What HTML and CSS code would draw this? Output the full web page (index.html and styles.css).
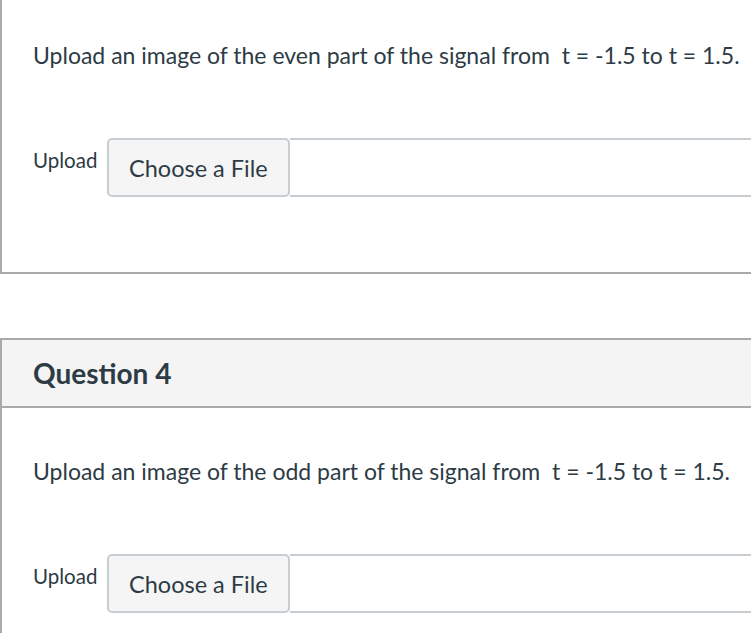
FILE: index.html
```html
<!DOCTYPE html>
<html>
<head>
<meta charset="utf-8">
<link rel="stylesheet" href="styles.css">
</head>
<body>
<div class="page">
  <section class="question first">
    <div class="q-body">
      <p class="q-text">Upload an image of the even part of the signal from &nbsp;t = -1.5 to t = 1.5.</p>
      <div class="upload-row">
        <span class="upload-label">Upload</span>
        <div class="file-field">
          <span class="file-btn">Choose a File</span>
          <span class="file-rest"></span>
        </div>
      </div>
    </div>
  </section>

  <section class="question second">
    <header class="q-header">Question 4</header>
    <div class="q-body">
      <p class="q-text">Upload an image of the odd part of the signal from &nbsp;t = -1.5 to t = 1.5.</p>
      <div class="upload-row">
        <span class="upload-label">Upload</span>
        <div class="file-field">
          <span class="file-btn">Choose a File</span>
          <span class="file-rest"></span>
        </div>
      </div>
    </div>
  </section>
</div>
</body>
</html>
```

FILE: styles.css
```css
html, body {
  margin: 0;
  padding: 0;
  background: #ffffff;
  overflow: hidden;
}
body {
  font-family: Lato, "Open Sans", "Liberation Sans", sans-serif;
  color: #2d3b45;
}
.page {
  width: 820px;
}
.question {
  border-left: 2px solid #aaaaaa;
  border-right: 2px solid #aaaaaa;
  border-bottom: 2px solid #aaaaaa;
}
.question.second {
  margin-top: 64px;
  border-top: 2px solid #aaaaaa;
}
.q-header {
  background: #f4f4f4;
  border-bottom: 2px solid #aaaaaa;
  height: 68px;
  box-sizing: border-box;
  padding-left: 31px;
  display: flex;
  align-items: center;
  font-size: 28px;
  font-weight: 700;
}
.q-body {
  padding: 0 0 75px 31px;
}
.first .q-body {
  padding-top: 41px;
}
.second .q-body {
  padding-top: 49px;
}
.q-text {
  margin: 0;
  font-size: 23px;
  line-height: 28px;
}
.upload-row {
  display: flex;
  align-items: flex-start;
  margin-top: 69px;
}
.upload-label {
  font-size: 20.5px;
  line-height: 24px;
  margin-top: 10px;
  width: 74px;
}
.file-field {
  display: flex;
  flex: 1;
  height: 59px;
}
.file-btn {
  display: flex;
  align-items: center;
  box-sizing: border-box;
  height: 59px;
  padding: 0 20px;
  background: #f5f5f5;
  border: 2px solid #c7cdd1;
  border-radius: 5px;
  font-size: 23.5px;
  white-space: nowrap;
}
.file-rest {
  flex: 1;
  border-top: 2px solid #c7cdd1;
  border-bottom: 2px solid #c7cdd1;
}
```
